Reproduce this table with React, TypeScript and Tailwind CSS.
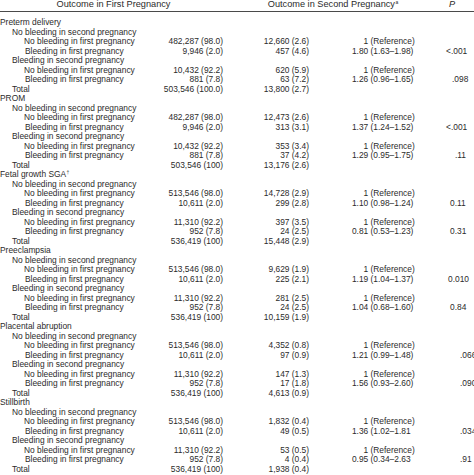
const sections = [
  {
    title: 'Preterm delivery',
    rows: [
      ['482,287 (98.0)', '12,660 (2.6)', null, ''],
      ['9,946 (2.0)', '457 (4.6)', ['1.80', '(1.63–1.98)'], '<.001', 'pl-[6px]'],
      ['10,432 (92.2)', '620 (5.9)', null, ''],
      ['881 (7.8)', '63 (7.2)', ['1.26', '(0.96–1.65)'], '.098', 'pl-[12px]'],
    ],
    total: ['503,546 (100.0)', '13,800 (2.7)'],
  },
  {
    title: 'PROM',
    rows: [
      ['482,287 (98.0)', '12,473 (2.6)', null, ''],
      ['9,946 (2.0)', '313 (3.1)', ['1.37', '(1.24–1.52)'], '<.001', 'pl-[6px]'],
      ['10,432 (92.2)', '353 (3.4)', null, ''],
      ['881 (7.8)', '37 (4.2)', ['1.29', '(0.95–1.75)'], '.11', 'pl-[15px]'],
    ],
    total: ['503,546 (100)', '13,176 (2.6)'],
  },
  {
    title: 'Fetal growth SGA',
    sup: '†',
    rows: [
      ['513,546 (98.0)', '14,728 (2.9)', null, ''],
      ['10,611 (2.0)', '299 (2.8)', ['1.10', '(0.98–1.24)'], '0.11', 'pl-[10px]'],
      ['11,310 (92.2)', '397 (3.5)', null, ''],
      ['952 (7.8)', '24 (2.5)', ['0.81', '(0.53–1.23)'], '0.31', 'pl-[10px]'],
    ],
    total: ['536,419 (100)', '15,448 (2.9)'],
  },
  {
    title: 'Preeclampsia',
    rows: [
      ['513,546 (98.0)', '9,629 (1.9)', null, ''],
      ['10,611 (2.0)', '225 (2.1)', ['1.19', '(1.04–1.37)'], '0.010', 'pl-[8px]'],
      ['11,310 (92.2)', '281 (2.5)', null, ''],
      ['952 (7.8)', '24 (2.5)', ['1.04', '(0.68–1.60)'], '0.84', 'pl-[10px]'],
    ],
    total: ['536,419 (100)', '10,159 (1.9)'],
  },
  {
    title: 'Placental abruption',
    rows: [
      ['513,546 (98.0)', '4,352 (0.8)', null, ''],
      ['10,611 (2.0)', '97 (0.9)', ['1.21', '(0.99–1.48)'], '.066', 'pl-[20px]'],
      ['11,310 (92.2)', '147 (1.3)', null, ''],
      ['952 (7.8)', '17 (1.8)', ['1.56', '(0.93–2.60)'], '.090', 'pl-[20px]'],
    ],
    total: ['536,419 (100)', '4,613 (0.9)'],
  },
  {
    title: 'Stillbirth',
    rows: [
      ['513,546 (98.0)', '1,832 (0.4)', null, ''],
      ['10,611 (2.0)', '49 (0.5)', ['1.36', '(1.02–1.81'], '.034', 'pl-[20px]'],
      ['11,310 (92.2)', '53 (0.5)', null, ''],
      ['952 (7.8)', '4 (0.4)', ['0.95', '(0.34–2.63'], '.91', 'pl-[20px]'],
    ],
    total: ['536,419 (100)', '1,938 (0.4)'],
  },
];

type Row = (string | string[] | null)[];

function Line({
  label,
  indent,
  first,
  second,
  ratio,
  p,
  pPad,
  sup,
}: {
  label: string;
  indent: string;
  first?: string;
  second?: string;
  ratio?: string[] | null | 'ref';
  p?: string;
  pPad?: string;
  sup?: string;
}) {
  return (
    <div className="grid grid-cols-[160px_63px_86px_131px_1fr] h-[9.5px] leading-[9.5px] whitespace-nowrap">
      <div className={indent}>
        {label}
        {sup && <span className="relative -top-[3px] text-[5px] leading-none ml-[0.5px]">{sup}</span>}
      </div>
      <div className="text-right">{first}</div>
      <div className="text-right">{second}</div>
      <div className="pl-[42.5px] flex">
        {ratio === 'ref' && (
          <>
            <span className="w-[19px] text-right pr-[2.3px]">1</span>
            <span>(Reference)</span>
          </>
        )}
        {Array.isArray(ratio) && (
          <>
            <span className="w-[19px] text-right pr-[2.3px]">{ratio[0]}</span>
            <span>{ratio[1]}</span>
          </>
        )}
      </div>
      <div className={pPad}>{p}</div>
    </div>
  );
}

export default function App() {
  return (
    <div
      className="w-[474px] h-[475px] overflow-hidden bg-white text-[#2b2b2b] text-[8.4px]"
      style={{ fontFamily: '"Liberation Sans", Arial, sans-serif' }}
    >
      <div className="h-[12px] border-b border-[#4a4a4a] grid grid-cols-[223px_1fr] text-[9.2px] leading-[9px]">
        <div className="text-center pl-[4px]">Outcome in First Pregnancy</div>
        <div className="grid grid-cols-[210px_1fr]">
          <div className="text-center pl-[10px]">
            Outcome in Second Pregnancy
            <span className="relative -top-[3px] text-[5px] leading-none ml-[0.5px]">a</span>
          </div>
          <div className="italic pl-[16px]">P</div>
        </div>
      </div>
      <div className="pt-[6px]">
        {sections.map((s) => {
          const rows = s.rows as Row[];
          return (
            <div key={s.title}>
              <Line label={s.title} indent="pl-0" sup={s.sup} />
              <Line label="No bleeding in second pregnancy" indent="pl-[12px]" />
              <Line
                label="No bleeding in first pregnancy"
                indent="pl-[24px]"
                first={rows[0][0] as string}
                second={rows[0][1] as string}
                ratio="ref"
              />
              <Line
                label="Bleeding in first pregnancy"
                indent="pl-[25px]"
                first={rows[1][0] as string}
                second={rows[1][1] as string}
                ratio={rows[1][2] as string[]}
                p={rows[1][3] as string}
                pPad={rows[1][4] as string}
              />
              <Line label="Bleeding in second pregnancy" indent="pl-[12px]" />
              <Line
                label="No bleeding in first pregnancy"
                indent="pl-[24px]"
                first={rows[2][0] as string}
                second={rows[2][1] as string}
                ratio="ref"
              />
              <Line
                label="Bleeding in first pregnancy"
                indent="pl-[25px]"
                first={rows[3][0] as string}
                second={rows[3][1] as string}
                ratio={rows[3][2] as string[]}
                p={rows[3][3] as string}
                pPad={rows[3][4] as string}
              />
              <Line label="Total" indent="pl-[12px]" first={s.total[0]} second={s.total[1]} />
            </div>
          );
        })}
      </div>
    </div>
  );
}
